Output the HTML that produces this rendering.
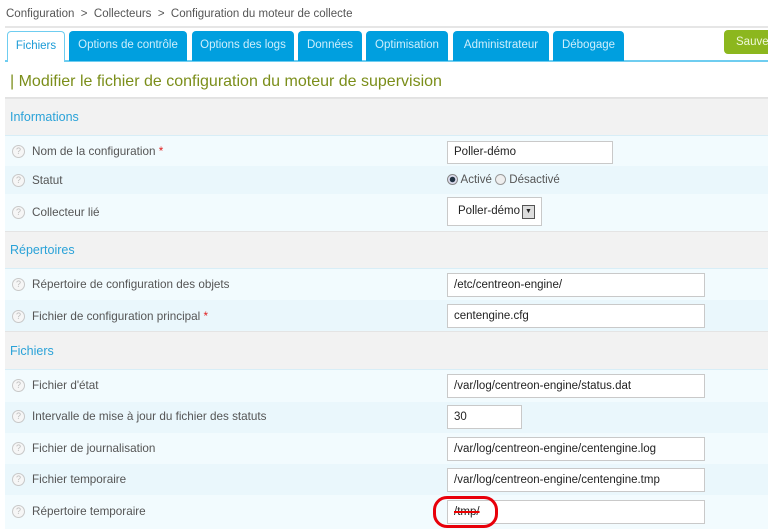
<!DOCTYPE html>
<html><head><meta charset="utf-8"><style>
*{margin:0;padding:0;box-sizing:border-box}
body{width:768px;height:529px;overflow:hidden;background:#fff;font-family:"Liberation Sans",sans-serif;font-size:11px;color:#444;position:relative}
.a{position:absolute}
.bc{left:6px;top:8px;font-size:11.5px;color:#555}
.tab{position:absolute;top:31px;height:30px;background:#009fdf;color:#cdeefc;border-radius:4px 4px 0 0;text-align:center;line-height:29px;font-size:11.5px}
.row{position:absolute;left:5px;right:0;background:#f2fbfe}
.row.alt{background:#eaf7fc}
.hd{position:absolute;left:5px;right:0;background:#f2f2f2;color:#2aa2d8;font-size:12.5px;border-top:1px solid #e4e4e4;border-bottom:1px solid #d8eef7}
.hd span{position:absolute;left:5px}
.lbl{position:absolute;left:7px;font-size:11.7px;color:#555;line-height:14px}
.q{display:inline-block;width:13px;height:13px;border:1px solid #c8c8c8;border-radius:50%;color:#bbb;font-size:9px;line-height:11px;text-align:center;margin-right:7px;vertical-align:top;background:#f6f6f6}
.in{position:absolute;background:#fff;border:1px solid #c9c9c9;font-family:"Liberation Sans",sans-serif;font-size:11.5px;color:#222;padding-left:6px}
.st{color:#e02020}
</style></head><body>
<div class="a bc">Configuration &nbsp;&gt;&nbsp; Collecteurs &nbsp;&gt;&nbsp; Configuration du moteur de collecte</div>
<div class="a" style="left:5px;right:0;top:26px;height:2px;background:#e6e6e6"></div>
<div class="a" style="left:5px;right:0;top:60px;height:2px;background:#6fcdf0"></div>
<div class="tab" style="left:7px;width:58px;background:#fff;border:1px solid #6fcdf0;border-bottom:none;color:#1a9bd6;height:31px">Fichiers</div>
<div class="tab" style="left:69px;width:118px">Options de contrôle</div>
<div class="tab" style="left:192px;width:102px">Options des logs</div>
<div class="tab" style="left:298px;width:64px">Données</div>
<div class="tab" style="left:366px;width:82px">Optimisation</div>
<div class="tab" style="left:453px;width:96px">Administrateur</div>
<div class="tab" style="left:553px;width:71px">Débogage</div>
<div class="a" style="left:724px;top:30px;width:50px;height:24px;background:#8cb71e;border-radius:4px;color:#eef7d8;line-height:24px;padding-left:12px;font-size:11.5px">Sauve</div>
<div class="a" style="left:10px;top:73px;font-size:16px;color:#7b8e1a">| Modifier le fichier de configuration du moteur de supervision</div>
<div class="a" style="left:5px;right:0;top:97px;height:1px;background:#e2e2e2"></div>

<div class="hd" style="top:98px;height:38px"><span style="top:11px">Informations</span></div>
<div class="row" style="top:136px;height:30px"><div class="lbl" style="top:9px"><span class="q">?</span>Nom de la configuration <span class="st">*</span></div></div>
<div class="in" style="left:447px;top:141px;width:166px;height:23px;line-height:21px">Poller-démo</div>
<div class="row alt" style="top:166px;height:28px"><div class="lbl" style="top:8px"><span class="q">?</span>Statut</div></div>
<div class="a" style="left:447px;top:174px;font-size:11.5px;color:#555"><span style="display:inline-block;width:11px;height:11px;border-radius:50%;border:1px solid #888;background:radial-gradient(circle,#234 0 2.5px,#dde 3px);vertical-align:-2px"></span> Activé <span style="display:inline-block;width:11px;height:11px;border-radius:50%;border:1px solid #999;background:#eee;vertical-align:-2px"></span> Désactivé</div>
<div class="row" style="top:194px;height:37px"><div class="lbl" style="top:12px"><span class="q">?</span>Collecteur lié</div></div>
<div class="in" style="left:447px;top:197px;width:95px;height:29px;line-height:27px;padding-left:10px">Poller-démo<span style="position:absolute;left:74px;top:7px;width:13px;height:14px;border:1px solid #555;background:#ddd;font-size:7px;line-height:12px;text-align:center">▼</span></div>

<div class="hd" style="top:231px;height:38px"><span style="top:11px">Répertoires</span></div>
<div class="row" style="top:269px;height:31px"><div class="lbl" style="top:9px"><span class="q">?</span>Répertoire de configuration des objets</div></div>
<div class="in" style="left:447px;top:273px;width:258px;height:24px;line-height:22px">/etc/centreon-engine/</div>
<div class="row alt" style="top:300px;height:31px"><div class="lbl" style="top:10px"><span class="q">?</span>Fichier de configuration principal <span class="st">*</span></div></div>
<div class="in" style="left:447px;top:304px;width:258px;height:24px;line-height:22px">centengine.cfg</div>

<div class="hd" style="top:331px;height:39px"><span style="top:12px">Fichiers</span></div>
<div class="row" style="top:370px;height:32px"><div class="lbl" style="top:9px"><span class="q">?</span>Fichier d'état</div></div>
<div class="in" style="left:447px;top:374px;width:258px;height:24px;line-height:22px">/var/log/centreon-engine/status.dat</div>
<div class="row alt" style="top:402px;height:31px"><div class="lbl" style="top:8px"><span class="q">?</span>Intervalle de mise à jour du fichier des statuts</div></div>
<div class="in" style="left:447px;top:405px;width:75px;height:24px;line-height:22px">30</div>
<div class="row" style="top:433px;height:31px"><div class="lbl" style="top:9px"><span class="q">?</span>Fichier de journalisation</div></div>
<div class="in" style="left:447px;top:437px;width:258px;height:24px;line-height:22px">/var/log/centreon-engine/centengine.log</div>
<div class="row alt" style="top:464px;height:31px"><div class="lbl" style="top:9px"><span class="q">?</span>Fichier temporaire</div></div>
<div class="in" style="left:447px;top:468px;width:258px;height:24px;line-height:22px">/var/log/centreon-engine/centengine.tmp</div>
<div class="row" style="top:495px;height:34px"><div class="lbl" style="top:10px"><span class="q">?</span>Répertoire temporaire</div></div>
<div class="in" style="left:447px;top:500px;width:258px;height:24px;line-height:22px"><span style="text-decoration:line-through;text-decoration-color:#e00;text-decoration-thickness:2px">/tmp/</span></div>
<div class="a" style="left:433px;top:496px;width:65px;height:32px;border:3.5px solid #e8000a;border-radius:14px"></div>
</body></html>
